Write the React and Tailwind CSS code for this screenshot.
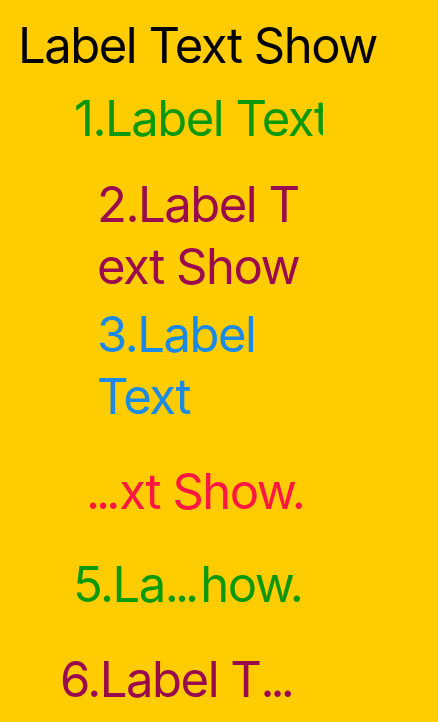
// Truncation dots drawn as tight periods, closer to the system ellipsis
function Dots() {
  return <span className="tracking-[-4px]">...</span>;
}

export default function App() {
  const font = { fontFamily: "Inter, 'Noto Sans', sans-serif" };
  return (
    <div
      className="w-[438px] h-[722px] overflow-hidden bg-[#ffcc00] flex flex-col text-[49px] leading-[62px] tracking-[-1.5px]"
      style={font}
    >
      <div className="shrink-0 mt-[15px] ml-[18px] text-black whitespace-nowrap">Label Text Show</div>

      <div className="shrink-0 mt-[11px] ml-[74px] w-[249px] overflow-hidden whitespace-nowrap text-[#0b990b]">
        1.Label Text Show.
      </div>

      <div className="shrink-0 mt-[24px] ml-[97px] w-[214px] break-all text-[#990a4e]">2.Label Text Show</div>

      <div className="shrink-0 mt-[6px] ml-[97px] w-[214px] text-[#1a8ae6]">3.Label Text</div>

      <div className="shrink-0 mt-[33px] ml-[86px] whitespace-nowrap text-[#ff1744]">
        <Dots />
        <span className="ml-[3px]">xt Show.</span>
      </div>

      <div className="shrink-0 mt-[31px] ml-[73px] whitespace-nowrap text-[#0b990b]">
        5.La<Dots />
        <span className="ml-[5px]">how.</span>
      </div>

      <div className="shrink-0 mt-[33px] ml-[60px] whitespace-nowrap text-[#990a4e]">
        6.Label T<Dots />
      </div>
    </div>
  );
}
